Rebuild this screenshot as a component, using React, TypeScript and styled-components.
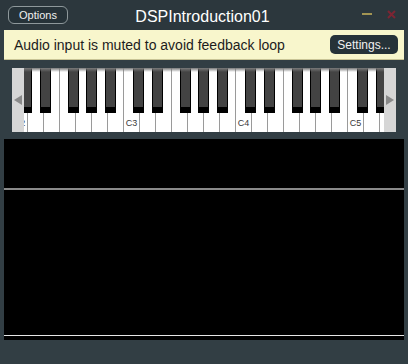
import React from "react";
import styled, { createGlobalStyle } from "styled-components";

const Global = createGlobalStyle`
  html, body { margin: 0; padding: 0; background: #323e44; }
  body { width: 408px; height: 364px; overflow: hidden; font-family: "Liberation Sans", Arial, sans-serif; }
`;

const Window = styled.div`
  width: 408px;
  height: 364px;
  box-sizing: border-box;
  background: #323e44;
  display: flex;
  flex-direction: column;
`;

const TitleBar = styled.div`
  position: relative;
  height: 30px;
  background: #2c373d;
  display: flex;
  align-items: center;
  justify-content: space-between;
  padding: 0 12px 0 8px;
`;

const OptionsButton = styled.button`
  width: 60px;
  height: 18px;
  margin-top: -1px;
  box-sizing: border-box;
  border: 1px solid #8e989b;
  border-radius: 6px;
  background: #263238;
  color: #f0f0f0;
  font-family: "Liberation Sans", Arial, sans-serif;
  font-size: 11px;
  padding: 0;
`;

const Title = styled.div`
  position: absolute;
  left: 0;
  right: 0;
  top: 0;
  height: 30px;
  line-height: 34px;
  text-align: center;
  color: #ffffff;
  font-size: 16px;
  pointer-events: none;
  padding-right: 3px;
`;

const WindowButtons = styled.div`
  display: flex;
  align-items: center;
  gap: 15px;
`;

const Minimise = styled.div`
  width: 10px;
  height: 2px;
  background: #a39553;
  margin-top: -2px;
`;

const CloseIcon = styled.svg`
  width: 9px;
  height: 9px;
  margin-top: -1px;
`;

const Banner = styled.div`
  margin: 0 4px;
  height: 30px;
  background: #f8f6cc;
  display: flex;
  align-items: center;
  justify-content: space-between;
  padding: 0 6px 0 10px;
  border-bottom: 1px solid #c9c496;
  box-sizing: border-box;
`;

const BannerText = styled.span`
  color: #1c1c1c;
  font-size: 14px;
`;

const SettingsButton = styled.button`
  width: 68px;
  height: 19px;
  border: none;
  border-radius: 5px;
  background: #263238;
  color: #f0f0f0;
  font-family: "Liberation Sans", Arial, sans-serif;
  font-size: 12px;
  padding: 0;
`;

const KeyboardRow = styled.div`
  margin: 8px 12px 0 12px;
  height: 64px;
  display: flex;
`;

const ScrollButton = styled.div`
  width: 12px;
  height: 64px;
  background: #d6d6d6;
  display: flex;
  align-items: center;
  justify-content: center;
  flex-shrink: 0;
`;

const Keys = styled.div`
  position: relative;
  flex: 1;
  overflow: hidden;
  background: #fff;
`;

const WhiteStrip = styled.div`
  display: flex;
  margin-left: -12px;
  height: 100%;
`;

const WhiteKey = styled.div`
  width: 16px;
  flex-shrink: 0;
  box-sizing: border-box;
  height: 100%;
  background: #ffffff;
  border-right: 1px solid #9a9a9a;
  display: flex;
  align-items: flex-end;
  justify-content: center;
  padding-bottom: 4px;
  font-size: 9px;
  color: #3a3a3a;
`;

const TopShadow = styled.div`
  position: absolute;
  left: 0;
  right: 0;
  top: 0;
  height: 4px;
  background: linear-gradient(#7a7a7a, rgba(255,255,255,0));
  pointer-events: none;
`;

const BlackKey = styled.div`
  position: absolute;
  top: 0;
  width: 11px;
  height: 45px;
  background: #000;
  display: flex;
  justify-content: center;
`;

const BlackKeyFace = styled.div`
  width: 9px;
  height: 39px;
  background: #434343;
`;

const Scope = styled.div`
  margin: 7px 4px 0 4px;
  height: 201px;
  background: #000;
  display: flex;
  flex-direction: column;
`;

const ScopeLine = styled.div<{ $color: string; $top: number; $h: number }>`
  margin-top: ${(p) => p.$top}px;
  height: ${(p) => p.$h}px;
  background: ${(p) => p.$color};
`;

const whiteNames = ["C", "D", "E", "F", "G", "A", "B"];
const blackOffsets: Record<number, number> = {
  0: 1 - 0.7 * 0.6,
  1: 2 - 0.7 * 0.4,
  3: 4 - 0.7 * 0.7,
  4: 5 - 0.7 * 0.5,
  5: 6 - 0.7 * 0.3,
};

export default function App() {
  const whites: { label: string }[] = [];
  for (let i = 0; i < 24; i++) {
    const octave = 2 + Math.floor(i / 7);
    const n = i % 7;
    whites.push({ label: n === 0 ? `C${octave}` : "" });
  }
  const blacks: number[] = [];
  for (let o = 0; o < 4; o++) {
    for (const k of [0, 1, 3, 4, 5]) {
      const x = -12 + o * 7 * 16 + blackOffsets[k] * 16;
      if (x < 360) blacks.push(x);
    }
  }
  return (
    <Window>
      <Global />
      <TitleBar>
        <OptionsButton>Options</OptionsButton>
        <Title>DSPIntroduction01</Title>
        <WindowButtons>
          <Minimise />
          <CloseIcon viewBox="0 0 9 9">
            <path d="M1 1 L8 8 M8 1 L1 8" stroke="#7c2533" strokeWidth="2" />
          </CloseIcon>
        </WindowButtons>
      </TitleBar>
      <Banner>
        <BannerText>Audio input is muted to avoid feedback loop</BannerText>
        <SettingsButton>Settings...</SettingsButton>
      </Banner>
      <KeyboardRow>
        <ScrollButton>
          <svg width="8" height="10" viewBox="0 0 8 10">
            <path d="M0 5 L8 0 L8 10 Z" fill="#8a8a8a" />
          </svg>
        </ScrollButton>
        <Keys>
          <WhiteStrip>
            {whites.map((w, i) => (
              <WhiteKey key={i}>{w.label}</WhiteKey>
            ))}
          </WhiteStrip>
          {blacks.map((x, i) => (
            <BlackKey key={i} style={{ left: x }}>
              <BlackKeyFace />
            </BlackKey>
          ))}
          <TopShadow />
        </Keys>
        <ScrollButton>
          <svg width="8" height="10" viewBox="0 0 8 10">
            <path d="M8 5 L0 0 L0 10 Z" fill="#8a8a8a" />
          </svg>
        </ScrollButton>
      </KeyboardRow>
      <Scope>
        <ScopeLine $color="#8a8a8a" $top={49} $h={2} />
        <ScopeLine $color="#e6e6e6" $top={145} $h={1} />
      </Scope>
    </Window>
  );
}
